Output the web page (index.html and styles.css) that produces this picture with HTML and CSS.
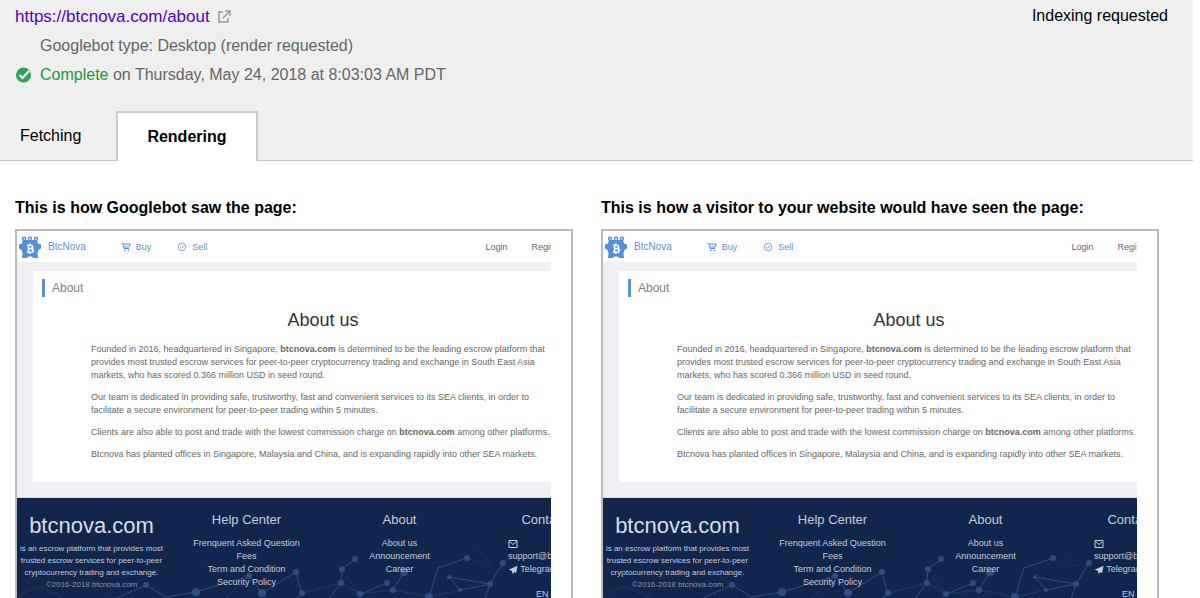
FILE: index.html
```html
<!DOCTYPE html>
<html lang="en">
<head>
    <meta charset="UTF-8">
    <meta name="viewport" content="width=device-width, initial-scale=1.0">
    <title>Fetch as Google</title>
    <link rel="stylesheet" href="styles.css">
</head>
<body>
    <svg class="sprite" aria-hidden="true">
        <symbol id="logo" viewBox="0 0 22 22">
            <circle cx="5" cy="2.600" r="2.200"/>
            <circle cx="11" cy="2.600" r="2.200"/>
            <circle cx="17" cy="2.600" r="2.200"/>
            <path d="M4 4h14l1 3.500 3 1v4l-2.500 1.500-1 3 0.500 5h-5l-1-1.500H9L8 22H3l0.500-5-1-3L0 12.500v-4l3-1z"/>
            <path d="M4.500 2.800h1.500M10 2.800h2M16 2.800h1.500" stroke="#fff" stroke-width="1.300"/>
            <path d="M9.500 9v7.500M8 9.200h3.800a1.700 1.700 0 0 1 0 3.400H9.500h2.800a1.800 1.800 0 0 1 0 3.700H8M10.800 7.500v2M10.800 16v2" fill="none" stroke="#fff" stroke-width="1.600"/>
        </symbol>
        <symbol id="cart" viewBox="0 0 10 10">
            <path d="M0.500 1.500h1.500l1 5h5M2.200 2h7l-1 3H3" fill="none" stroke="currentColor"/>
            <circle cx="3.700" cy="8.500" r="0.800" fill="currentColor"/>
            <circle cx="7.500" cy="8.500" r="0.800" fill="currentColor"/>
        </symbol>
        <symbol id="tick" viewBox="0 0 10 10">
            <circle cx="5" cy="5" r="3.800" fill="none" stroke="currentColor" stroke-width="0.800"/>
            <path d="M3.200 5l1.400 1.500 2.400-3" fill="none" stroke="currentColor" stroke-width="0.900"/>
        </symbol>
        <symbol id="mail" viewBox="0 0 10 10">
            <path d="M1 1.500h8v7H1zM1.500 2.500L5 5.500l3.500-3" fill="none" stroke="currentColor"/>
        </symbol>
        <symbol id="plane" viewBox="0 0 10 10">
            <path d="M9.500 0.800L0.500 4.800l3.300 1L4.500 9l1.700-1.700 2 0.800z" fill="currentColor"/>
        </symbol>
        <symbol id="network" viewBox="0 0 612 110">
            <g fill="none" stroke="#46679f" stroke-width="1">
                <path d="M100 100l29-13 20 12 30-5 53-16 13 17 34-21 6 22-20 16M338 61l-13 10-1 14-20 25M343 96l27-11M376 92l11-18M412 99l9-29 29-10M432 79l41 7-30 6zM486 65l-13 21-8 24"/>
                <path d="M232 78l-32 30M285 95l39-10 19 11 33-4 36 7 31-7" opacity="0.500"/>
                <path d="M460 50l15 18-25-8M387 74l-8-23" opacity="0.300"/>
                <path d="M0 98l22-10 30 14 48-2M343 96l-14-18" opacity="0.400"/>
            </g>
            <g fill="#46679f">
                <circle cx="129" cy="87" r="3"/>
                <circle cx="179" cy="94" r="4"/>
                <circle cx="232" cy="78" r="3"/>
                <circle cx="245" cy="95" r="4"/>
                <circle cx="279" cy="74" r="3"/>
                <circle cx="285" cy="95" r="3"/>
                <circle cx="338" cy="61" r="3"/>
                <circle cx="325" cy="71" r="3"/>
                <circle cx="324" cy="85" r="3"/>
                <circle cx="343" cy="96" r="3"/>
                <circle cx="370" cy="85" r="3"/>
                <circle cx="376" cy="92" r="3"/>
                <circle cx="387" cy="74" r="4"/>
                <circle cx="412" cy="99" r="4"/>
                <circle cx="450" cy="60" r="3"/>
                <circle cx="432" cy="79" r="2"/>
                <circle cx="443" cy="92" r="2"/>
                <circle cx="473" cy="86" r="3"/>
                <circle cx="486" cy="65" r="3"/>
            </g>
        </symbol>
    </svg>

    <header class="header">
        <div class="header-top">
            <div class="details">
                <div class="row">
                    <a class="url" href="https://btcnova.com/about">https://btcnova.com/about</a>
                    <svg class="external" viewBox="0 0 13 13" aria-hidden="true">
                        <path d="M5 2H1v10h9V8M7 1h5v5M12 1L5 8" fill="none" stroke="#999" stroke-width="1.500"/>
                    </svg>
                </div>
                <div class="row indent">Googlebot type: Desktop (render requested)</div>
                <div class="row">
                    <svg class="check" viewBox="0 0 16 16" aria-hidden="true">
                        <circle cx="8" cy="8" r="7.500" fill="#2ba457"/>
                        <path d="M4 8l3 3 6.500-7" fill="none" stroke="#fff" stroke-width="2.200"/>
                    </svg>
                    <span><span class="complete">Complete</span> on Thursday, May 24, 2018 at 8:03:03 AM PDT</span>
                </div>
            </div>
            <div class="indexing">Indexing requested</div>
        </div>
        <div class="tabs">
            <button type="button" class="tab">Fetching</button>
            <button type="button" class="tab active">Rendering</button>
        </div>
    </header>

    <main class="renders">
        <section class="render">
            <h2>This is how Googlebot saw the page:</h2>
            <div class="frame">
                <div class="clip">
                    <div class="site">
                        <div class="site-nav">
                            <svg class="logo"><use href="#logo"/></svg>
                            <a class="brand" href="#">BtcNova</a>
                            <a class="nav-link" href="#"><svg class="icon"><use href="#cart"/></svg>Buy</a>
                            <a class="nav-link" href="#"><svg class="icon"><use href="#tick"/></svg>Sell</a>
                            <div class="account">
                                <a href="#">Login</a>
                                <a href="#">Register</a>
                            </div>
                        </div>
                        <div class="site-body">
                            <div class="card">
                                <div class="card-title">About</div>
                                <h3>About us</h3>
                                <div class="copy">
                                    <p>Founded in 2016, headquartered in Singapore, <b>btcnova.com</b> is determined to be the leading escrow platform that<br>provides most trusted escrow services for peer-to-peer cryptocurrency trading and exchange in South East Asia<br>markets, who has scored 0.366 million USD in seed round.</p>
                                    <p>Our team is dedicated in providing safe, trustworthy, fast and convenient services to its SEA clients, in order to<br>facilitate a secure environment for peer-to-peer trading within 5 minutes.</p>
                                    <p>Clients are also able to post and trade with the lowest commission charge on <b>btcnova.com</b> among other platforms.</p>
                                    <p>Btcnova has planted offices in Singapore, Malaysia and China, and is expanding rapidly into other SEA markets.</p>
                                </div>
                            </div>
                        </div>
                        <div class="site-footer">
                            <svg class="network" aria-hidden="true"><use href="#network"/></svg>
                            <div class="about-site">
                                <div class="name">btcnova.com</div>
                                <p>is an escrow platform that provides most<br>trusted escrow services for peer-to-peer<br>cryptocurrency trading and exchange.<br><span class="copyright">©2016-2018 btcnova.com</span></p>
                            </div>
                            <div class="column">
                                <h4>Help Center</h4>
                                <a href="#">Frenquent Asked Question</a>
                                <a href="#">Fees</a>
                                <a href="#">Term and Condition</a>
                                <a href="#">Security Policy</a>
                            </div>
                            <div class="column">
                                <h4>About</h4>
                                <a href="#">About us</a>
                                <a href="#">Announcement</a>
                                <a href="#">Career</a>
                            </div>
                            <div class="column contact">
                                <h4>Contact us</h4>
                                <a href="#"><svg class="icon"><use href="#mail"/></svg></a>
                                <a href="#">support@btcnova.com</a>
                                <a href="#"><svg class="icon"><use href="#plane"/></svg> Telegram</a>
                                <div class="language">EN | CN</div>
                            </div>
                        </div>
                    </div>
                </div>
            </div>
        </section>

        <section class="render">
            <h2>This is how a visitor to your website would have seen the page:</h2>
            <div class="frame">
                <div class="clip">
                    <div class="site">
                        <div class="site-nav">
                            <svg class="logo"><use href="#logo"/></svg>
                            <a class="brand" href="#">BtcNova</a>
                            <a class="nav-link" href="#"><svg class="icon"><use href="#cart"/></svg>Buy</a>
                            <a class="nav-link" href="#"><svg class="icon"><use href="#tick"/></svg>Sell</a>
                            <div class="account">
                                <a href="#">Login</a>
                                <a href="#">Register</a>
                            </div>
                        </div>
                        <div class="site-body">
                            <div class="card">
                                <div class="card-title">About</div>
                                <h3>About us</h3>
                                <div class="copy">
                                    <p>Founded in 2016, headquartered in Singapore, <b>btcnova.com</b> is determined to be the leading escrow platform that<br>provides most trusted escrow services for peer-to-peer cryptocurrency trading and exchange in South East Asia<br>markets, who has scored 0.366 million USD in seed round.</p>
                                    <p>Our team is dedicated in providing safe, trustworthy, fast and convenient services to its SEA clients, in order to<br>facilitate a secure environment for peer-to-peer trading within 5 minutes.</p>
                                    <p>Clients are also able to post and trade with the lowest commission charge on <b>btcnova.com</b> among other platforms.</p>
                                    <p>Btcnova has planted offices in Singapore, Malaysia and China, and is expanding rapidly into other SEA markets.</p>
                                </div>
                            </div>
                        </div>
                        <div class="site-footer">
                            <svg class="network" aria-hidden="true"><use href="#network"/></svg>
                            <div class="about-site">
                                <div class="name">btcnova.com</div>
                                <p>is an escrow platform that provides most<br>trusted escrow services for peer-to-peer<br>cryptocurrency trading and exchange.<br><span class="copyright">©2016-2018 btcnova.com</span></p>
                            </div>
                            <div class="column">
                                <h4>Help Center</h4>
                                <a href="#">Frenquent Asked Question</a>
                                <a href="#">Fees</a>
                                <a href="#">Term and Condition</a>
                                <a href="#">Security Policy</a>
                            </div>
                            <div class="column">
                                <h4>About</h4>
                                <a href="#">About us</a>
                                <a href="#">Announcement</a>
                                <a href="#">Career</a>
                            </div>
                            <div class="column contact">
                                <h4>Contact us</h4>
                                <a href="#"><svg class="icon"><use href="#mail"/></svg></a>
                                <a href="#">support@btcnova.com</a>
                                <a href="#"><svg class="icon"><use href="#plane"/></svg> Telegram</a>
                                <div class="language">EN | CN</div>
                            </div>
                        </div>
                    </div>
                </div>
            </div>
        </section>
    </main>
</body>
</html>
```
FILE: styles.css
```css
* {
    box-sizing: border-box;
}
body {
    margin: 0;
    background-color: #fff;
    font-family: "Liberation Sans", Arial, sans-serif;
    font-size: 16px;
    color: #000;
}
h2, h3, h4, p {
    margin: 0;
}
a {
    color: inherit;
    text-decoration: none;
}
.sprite {
    display: none;
}

/* Header */
.header {
    margin-right: 7px;
    background-color: #efefef;
    border-bottom: 1px solid #c4c4c4;
}
.header-top {
    display: flex;
    justify-content: space-between;
    padding: 2px 25px 0 15px;
}
.row {
    display: flex;
    align-items: center;
    gap: 8px;
    line-height: 29px;
    color: #666;
}
.indent {
    padding-left: 25px;
}
.row .url {
    font-size: 17px;
    color: #5200c9;
}
.external {
    width: 13px;
    height: 13px;
}
.check {
    width: 17px;
    height: 16px;
}
.complete {
    color: #159c40;
}
.indexing {
    line-height: 28px;
}
.tabs {
    display: flex;
    margin: 22px 0 -1px;
}
.tab {
    padding: 0 35px 0 20px;
    border: 0;
    background: none;
    font: inherit;
    line-height: 48px;
    cursor: pointer;
}
.tab.active {
    padding: 0 29px;
    border: 2px solid #ccc;
    border-bottom: 0;
    background-color: #fff;
    font-weight: bold;
}

/* Render previews */
.renders {
    display: grid;
    grid-template-columns: 1fr 1fr;
    gap: 28px;
    padding: 37px 41px 0 15px;
}
.render {
    min-width: 0;
}
.render h2 {
    margin-bottom: 11px;
    font-size: 16px;
    line-height: 20px;
    white-space: nowrap;
}
.frame {
    padding-right: 20px;
    border: 2px solid #bbb;
}
.clip {
    overflow: hidden;
}
.site {
    width: 612px;
    font-size: 9px;
    background-color: #eef0f4;
}
.site-nav {
    display: flex;
    align-items: center;
    height: 31px;
    padding: 0 64px 0 2px;
    background-color: #fff;
    color: #5b92d2;
}
.logo {
    width: 22px;
    height: 22px;
    fill: #5590d8;
}
.icon {
    width: 10px;
    height: 10px;
}
.brand {
    margin: 0 35px 0 7px;
    font-size: 10px;
}
.nav-link {
    display: flex;
    align-items: center;
    gap: 5px;
    margin-right: 26px;
}
.account {
    display: flex;
    gap: 24px;
    margin-left: auto;
    color: #666;
}
.site-body {
    padding: 9px 16px 15px;
    border-bottom: 1px solid #d6d8dc;
}
.card {
    padding: 8px 9px 21px;
    background-color: #fff;
}
.card-title {
    padding-left: 7px;
    border-left: 3px solid #5b92cf;
    font-size: 12px;
    line-height: 18px;
    color: #808080;
}
.card h3 {
    margin: 12px 0;
    font-size: 18px;
    font-weight: normal;
    line-height: 22px;
    text-align: center;
    color: #333;
}
.copy {
    display: grid;
    gap: 9px;
    padding-left: 49px;
    line-height: 13px;
    white-space: nowrap;
    color: #666;
}
.site-footer {
    position: relative;
    display: grid;
    grid-template-columns: repeat(4, 1fr);
    height: 110px;
    padding-top: 13px;
    background-color: #12264d;
    text-align: center;
    white-space: nowrap;
    color: #c3cbda;
}
.network {
    position: absolute;
    top: 0;
    left: 0;
    width: 100%;
    height: 100%;
    opacity: 0.6;
}
.about-site, .column {
    position: relative;
}
.about-site {
    padding-right: 4px;
}
.name {
    margin-bottom: 2px;
    font-size: 22px;
    line-height: 30px;
    color: #d5deee;
}
.about-site p {
    font-size: 8px;
    line-height: 12px;
}
.copyright {
    color: #8a94a8;
}
.column {
    display: flex;
    flex-direction: column;
    line-height: 13px;
}
.column h4 {
    margin-bottom: 8px;
    font-size: 13px;
    font-weight: normal;
    line-height: 18px;
}
.contact a {
    padding-left: 32px;
    text-align: left;
}
.contact .icon {
    vertical-align: middle;
}
.language {
    margin-top: 12px;
}
```
